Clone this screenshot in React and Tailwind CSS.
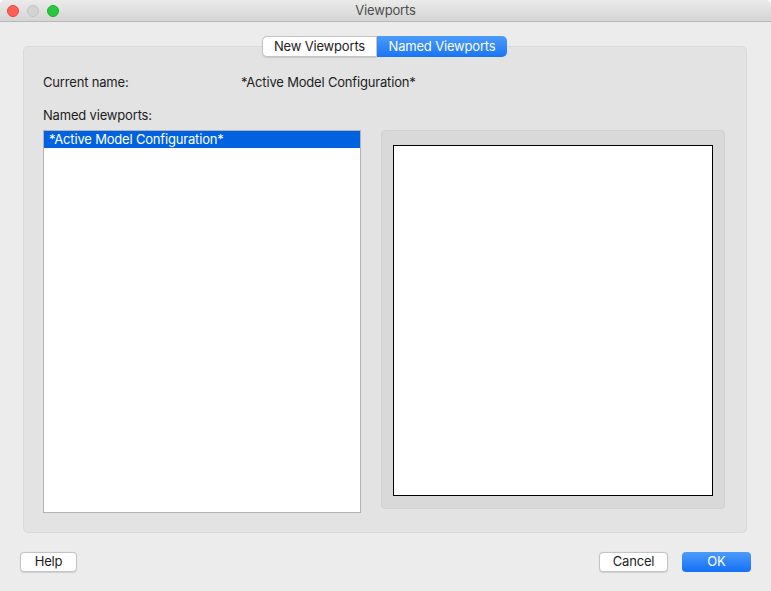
import React from "react";

const font = { fontFamily: '"Inter", "Liberation Sans", sans-serif' };

export default function App() {
  return (
    <div className="w-[771px] h-[591px] bg-white overflow-hidden" style={font}>
      <div className="w-[771px] h-[591px] bg-[#ececec] rounded-t-[5px] flex flex-col text-[13px] tracking-[-0.18px] text-[#1e1e1e] overflow-hidden">
        {/* Title bar */}
        <div className="h-[22px] shrink-0 bg-gradient-to-b from-[#ebebeb] to-[#d5d5d5] border-b border-[#b8b8b8] flex items-center relative">
          <div className="flex items-center gap-[8px] pl-[7px]">
            <div className="w-[12px] h-[12px] rounded-full bg-[#fe5f57] border border-[#e1463f]" />
            <div className="w-[12px] h-[12px] rounded-full bg-[#d3d3d3] border border-[#c3c3c3]" />
            <div className="w-[12px] h-[12px] rounded-full bg-[#28c840] border border-[#1dad2b]" />
          </div>
          <div className="absolute inset-0 flex items-center justify-center text-[13px] text-[#4d4d4d] pointer-events-none">
            Viewports
          </div>
        </div>

        {/* Content */}
        <div className="flex flex-col pl-[23px] pr-[24px] pt-[14px]">
          {/* Tabs */}
          <div className="self-center flex h-[21px] -mb-[11px] relative z-10 ml-[-1px]">
            <div className="w-[115px] h-[21px] bg-white border border-[#c4c4c4] rounded-l-[5px] flex items-center justify-center text-[13px] text-[#222] shadow-[0_0.5px_1px_rgba(0,0,0,0.12)]">
              New Viewports
            </div>
            <div className="w-[130px] h-[21px] bg-gradient-to-b from-[#4a9bfa] to-[#1874f5] rounded-r-[5px] flex items-center justify-center text-[13px] text-white">
              Named Viewports
            </div>
          </div>

          {/* Group box */}
          <div className="h-[487px] bg-[#e3e3e3] border border-[#dadada] rounded-[5px] flex flex-col pl-[19px] pr-[21px] pt-[28px]">
            <div className="flex h-[16px] items-center">
              <div className="w-[198px]">Current name:</div>
              <div>*Active Model Configuration*</div>
            </div>
            <div className="h-[16px] mt-[17px] flex items-center">Named viewports:</div>
            <div className="flex mt-[6px] gap-[20px] items-start">
              {/* List */}
              <div className="w-[318px] h-[383px] bg-white border border-[#b3b3b3] pt-0">
                <div className="h-[17px] bg-[#0062e0] text-white flex items-center pl-[5px] leading-none">
                  *Active Model Configuration*
                </div>
              </div>
              {/* Preview */}
              <div className="w-[344px] h-[379px] bg-[#d9d9d9] border border-[#d2d2d2] rounded-[4px] pl-[11px] pt-[14px]">
                <div className="w-[320px] h-[351px] bg-white border border-black" />
              </div>
            </div>
          </div>
        </div>

        {/* Buttons */}
        <div className="flex items-center justify-between px-[20px] mt-[19px]">
          <button className="w-[57px] h-[20px] bg-white border border-[#c4c4c4] rounded-[4px] text-[13px] text-[#222] flex items-center justify-center shadow-[0_0.5px_1px_rgba(0,0,0,0.12)]">
            Help
          </button>
          <div className="flex gap-[14px]">
            <button className="w-[69px] h-[20px] bg-white border border-[#c4c4c4] rounded-[4px] text-[13px] text-[#222] flex items-center justify-center shadow-[0_0.5px_1px_rgba(0,0,0,0.12)]">
              Cancel
            </button>
            <button className="w-[69px] h-[20px] bg-gradient-to-b from-[#4a9bfa] to-[#1170f5] rounded-[4px] text-[13px] text-white flex items-center justify-center">
              OK
            </button>
          </div>
        </div>
      </div>
    </div>
  );
}
